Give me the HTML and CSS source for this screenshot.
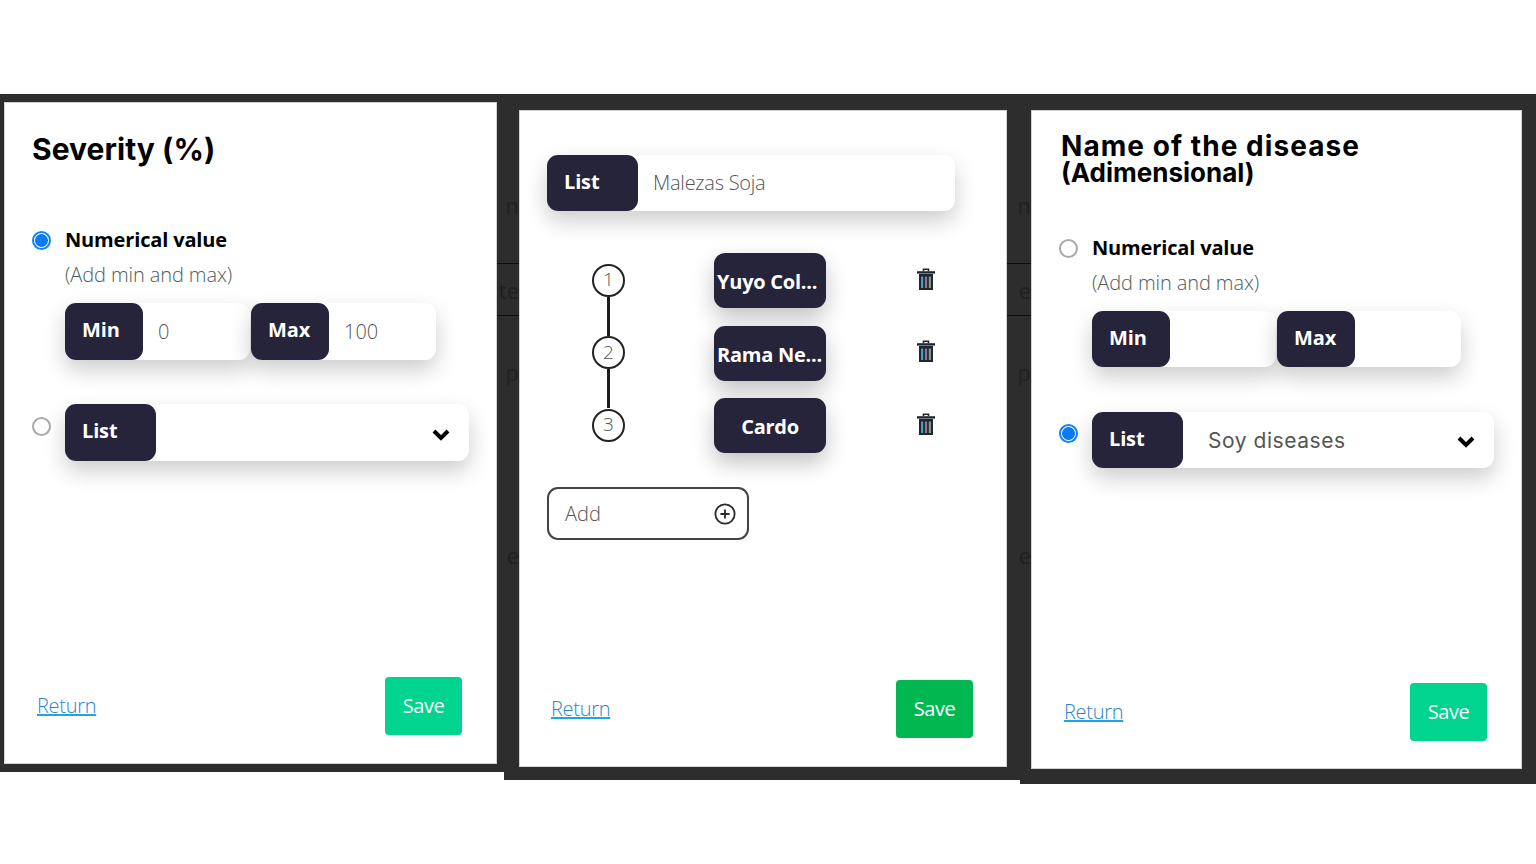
FILE: index.html
```html
<!DOCTYPE html>
<html lang="en">
  <head>
    <title>Variable settings</title>
    <link rel="stylesheet" href="styles.css">
  </head>
  <body>
    <div id="sheet">

      <!-- severity panel -->
      <section class="panel" id="panel-severity">
        <span class="ghost-line line-a"></span>
        <span class="ghost-line line-b"></span>
        <div class="title-box">
          <h1 class="title">Severity (%)</h1>
        </div>
        <div class="option">
          <input type="radio" class="radio" name="severity" checked>
          <div>
            <div class="option-name">Numerical value</div>
            <div class="option-hint">(Add min and max)</div>
            <div class="min-max">
              <div class="field"><span class="tag tag-short">Min</span><span class="field-value">0</span></div>
              <div class="field"><span class="tag tag-short">Max</span><span class="field-value">100</span></div>
            </div>
          </div>
        </div>
        <div class="option option-list">
          <input type="radio" class="radio" name="severity">
          <div class="field list-select">
            <span class="tag">List</span>
            <span class="select-value"></span>
            <svg class="chevron" viewBox="0 0 18 13"><path d="M2 3l7 7 7-7" fill="none" stroke="#000" stroke-width="4"/></svg>
          </div>
        </div>
        <div class="panel-foot">
          <a class="return-link" href="#">Return</a>
          <button class="save-btn">Save</button>
        </div>
      </section>

      <!-- list panel -->
      <section class="panel" id="panel-list">
        <span class="ghost-line line-a"></span>
        <span class="ghost-line line-b"></span>
        <span class="ghost-letter letter-a">n</span>
        <span class="ghost-letter letter-b">te</span>
        <span class="ghost-letter letter-c">p</span>
        <span class="ghost-letter letter-d">e</span>
        <div class="field list-name">
          <span class="tag">List</span>
          <span class="field-value">Malezas Soja</span>
        </div>
        <div class="steps">
          <div class="step">
            <span class="step-num">1</span>
            <span class="pill pill-cut">Yuyo Col...</span>
            <svg class="trash" viewBox="0 0 18 22"><use href="#trash-icon"/></svg>
          </div>
          <div class="step">
            <span class="step-num">2</span>
            <span class="pill pill-cut">Rama Ne...</span>
            <svg class="trash" viewBox="0 0 18 22"><use href="#trash-icon"/></svg>
          </div>
          <div class="step">
            <span class="step-num">3</span>
            <span class="pill">Cardo</span>
            <svg class="trash" viewBox="0 0 18 22"><use href="#trash-icon"/></svg>
          </div>
        </div>
        <div class="add-box">
          <span>Add</span>
          <svg class="plus" viewBox="0 0 24 24">
            <circle cx="12" cy="12" r="10.5" fill="none" stroke="#2b2b2b" stroke-width="2"/>
            <path d="M12 7v10M7 12h10" stroke="#2b2b2b" stroke-width="2"/>
          </svg>
        </div>
        <div class="panel-foot">
          <a class="return-link" href="#">Return</a>
          <button class="save-btn save-dark">Save</button>
        </div>
      </section>

      <!-- disease panel -->
      <section class="panel" id="panel-disease">
        <span class="ghost-line line-a"></span>
        <span class="ghost-line line-b"></span>
        <span class="ghost-letter letter-a">n</span>
        <span class="ghost-letter letter-b">e</span>
        <span class="ghost-letter letter-c">p</span>
        <span class="ghost-letter letter-d">e</span>
        <div class="title-box">
          <h1 class="title title-long">Name of the disease<br><span class="title-sub">(Adimensional)</span></h1>
        </div>
        <div class="option">
          <input type="radio" class="radio" name="disease">
          <div>
            <div class="option-name">Numerical value</div>
            <div class="option-hint">(Add min and max)</div>
            <div class="min-max">
              <div class="field"><span class="tag tag-short">Min</span></div>
              <div class="field"><span class="tag tag-short">Max</span></div>
            </div>
          </div>
        </div>
        <div class="option option-list">
          <input type="radio" class="radio" name="disease" checked>
          <div class="field list-select">
            <span class="tag">List</span>
            <span class="select-value">Soy diseases</span>
            <svg class="chevron" viewBox="0 0 18 13"><path d="M2 3l7 7 7-7" fill="none" stroke="#000" stroke-width="4"/></svg>
          </div>
        </div>
        <div class="panel-foot">
          <a class="return-link" href="#">Return</a>
          <button class="save-btn">Save</button>
        </div>
      </section>
    </div>

    <svg width="0" height="0" class="icon-defs">
      <symbol id="trash-icon" viewBox="0 0 18 22">
        <path d="M6.5 3V1.2h5V3" fill="none" stroke="#1c2730" stroke-width="1.6"/>
        <path d="M0 3.2h18v2.4H0z" fill="#1c2730"/>
        <path d="M2 6h14v16H2z" fill="#1c2730"/>
        <path d="M4 8.5h2.2V20H4z" fill="#4a9db5"/>
        <path d="M7.9 8.5h2.2V20H7.9z" fill="#9a6f9c"/>
        <path d="M11.8 8.5H14V20h-2.2z" fill="#7d9c8c"/>
      </symbol>
    </svg>
  </body>
</html>
```

FILE: styles.css
```css
* {
  margin: 0;
  padding: 0;
  box-sizing: border-box;
}

body {
  height: 100vh;
  overflow: hidden;
  background-color: #fff;
  font-family: "Open Sans", sans-serif;
  color: #000;
}

#sheet {
  display: flex;
  align-items: flex-start;
  padding-top: 94px;
}

.icon-defs {
  position: absolute;
}

/* panels, the dark frame is the border */
.panel {
  position: relative;
  display: flex;
  flex-direction: column;
  background-color: #fff;
  border-style: solid;
  border-color: #2d2d2d;
  padding: 0 0 29px 28px;
  box-shadow: inset 0 0 0 1px #d2d2d2;
}

#panel-severity {
  width: 504px;
  height: 678px;
  border-width: 8px 7px 8px 4px;
}

#panel-list {
  width: 516px;
  height: 686px;
  border-width: 16px 13px 13px 15px;
}

#panel-disease {
  width: 516px;
  height: 690px;
  border-width: 16px 14px 15px 11px;
  padding-bottom: 28px;
}

/* bits of the page behind, showing through the frame */
.ghost-line {
  position: absolute;
  right: 100%;
  width: 15px;
  height: 1px;
  background-color: #0c0c0c;
}

.line-a {
  top: 153px;
}

.line-b {
  top: 205px;
}

#panel-severity .ghost-line {
  left: 100%;
  right: auto;
  width: 7px;
}

#panel-severity .line-a {
  top: 161px;
}

#panel-severity .line-b {
  top: 213px;
}

#panel-disease .ghost-line {
  width: 24px;
}

.ghost-letter {
  position: absolute;
  right: 100%;
  font-size: 22px;
  line-height: 24px;
  color: #202020;
  white-space: nowrap;
}

.letter-a {
  top: 83px;
}

.letter-b {
  top: 168px;
}

.letter-c {
  top: 250px;
}

.letter-d {
  top: 433px;
}

/* headings */
.title-box {
  height: 126px;
  padding-top: 28px;
}

.title {
  font-family: Inter, sans-serif;
  font-size: 30px;
  line-height: 38px;
  font-weight: 700;
  letter-spacing: 0.05px;
}

#panel-disease .title-box {
  padding: 23px 0 0 2px;
}

.title-long {
  font-size: 28px;
  line-height: 26px;
  letter-spacing: 1.05px;
}

.title-sub {
  font-size: 26px;
  letter-spacing: 0;
}

/* radio rows */
.option {
  display: grid;
  grid-template-columns: 19px auto;
  column-gap: 14px;
  justify-content: start;
}

.option-list {
  margin-top: 44px;
}

#panel-disease .option-list {
  margin-top: 45px;
}

.radio {
  appearance: none;
  width: 19px;
  height: 19px;
  margin-top: 3px;
  border: 2px solid #a9a9a9;
  border-radius: 50%;
  background-color: #fff;
}

.radio:checked {
  border-color: #0b84ff;
  background: radial-gradient(circle, #0b7bf5 0, #0b7bf5 6px, #fff 6.8px);
}

.option-list .radio {
  margin-top: 13px;
}

#panel-disease .option-list .radio {
  margin-top: 12px;
}

.option-name {
  font-size: 20px;
  line-height: 24px;
  font-weight: 700;
  letter-spacing: -0.15px;
}

.option-hint {
  margin-top: 11px;
  font-size: 20px;
  line-height: 24px;
  font-weight: 300;
  letter-spacing: -0.1px;
  color: #4d5c5c;
}

/* label + value fields */
.field {
  display: flex;
  align-items: center;
  height: 57px;
  background-color: #fff;
  border-radius: 11px;
  box-shadow: 0 10px 22px rgba(0, 0, 0, 0.2);
}

#panel-disease .field {
  height: 56px;
}

.tag {
  display: flex;
  align-items: center;
  flex: none;
  width: 91px;
  height: 100%;
  padding: 0 0 4px 17px;
  background-color: #25243a;
  border-radius: 11px;
  color: #fff;
  font-size: 20px;
  font-weight: 700;
  letter-spacing: -0.15px;
}

.tag-short {
  width: 78px;
}

.field-value {
  padding-left: 15px;
  font-size: 20px;
  font-weight: 300;
  color: #555;
}

.min-max {
  display: flex;
  gap: 1px;
  width: 371px;
  margin-top: 16px;
}

.min-max .field {
  flex: 1;
}

#panel-disease .min-max {
  width: 369px;
}

.list-select {
  width: 404px;
}

#panel-disease .list-select {
  width: 402px;
}

.select-value {
  flex: 1;
  padding-left: 25px;
  font-family: Inter, sans-serif;
  font-size: 21px;
  letter-spacing: 0.55px;
  color: #555;
}

.chevron {
  width: 18px;
  height: 13px;
  margin: 3px 19px 0 0;
}

/* list panel */
.list-name {
  width: 408px;
  height: 56px;
  margin-top: 45px;
}

.list-name .field-value {
  padding-bottom: 2px;
  letter-spacing: -0.25px;
}

.steps {
  display: flex;
  flex-direction: column;
  gap: 17.5px;
  margin-top: 42px;
  padding-left: 45px;
}

.step {
  position: relative;
  display: flex;
  align-items: center;
  height: 55px;
}

.step-num {
  position: relative;
  display: flex;
  align-items: center;
  justify-content: center;
  width: 33px;
  height: 33px;
  margin: -1px 89px 0 0;
  padding-bottom: 2px;
  border: 2px solid #222;
  border-radius: 50%;
  background-color: #fff;
  font-size: 19px;
  font-weight: 300;
  color: #555;
}

.step-num::after {
  content: "";
  position: absolute;
  left: 13px;
  top: 31px;
  width: 3px;
  height: 39px;
  background-color: #1c1c1c;
}

.step:last-child .step-num::after {
  display: none;
}

.pill {
  flex: none;
  display: flex;
  align-items: center;
  justify-content: center;
  width: 112px;
  height: 100%;
  padding-top: 2px;
  background-color: #25243a;
  border-radius: 11px;
  box-shadow: 0 10px 22px rgba(0, 0, 0, 0.24);
  color: #fff;
  font-size: 20px;
  font-weight: 700;
  letter-spacing: -0.25px;
  white-space: nowrap;
}

.pill-cut {
  justify-content: flex-start;
  padding-left: 3px;
}

.trash {
  width: 18px;
  height: 22px;
  margin: -4px 0 0 91px;
}

.add-box {
  display: flex;
  align-items: center;
  justify-content: space-between;
  width: 202px;
  height: 53px;
  margin-top: 34px;
  padding: 0 11px 0 16px;
  border: 2px solid #444;
  border-radius: 11px;
  font-size: 20px;
  font-weight: 300;
  color: #555;
}

.plus {
  width: 22px;
  height: 22px;
}

/* footer */
.panel-foot {
  display: flex;
  align-items: center;
  justify-content: space-between;
  margin-top: auto;
  padding: 0 35px 0 5px;
}

#panel-list .panel-foot {
  padding: 0 34px 0 4px;
}

.return-link {
  padding-bottom: 2px;
  font-size: 20px;
  font-weight: 300;
  letter-spacing: -0.3px;
  color: #2a86c8;
  text-decoration: underline;
  text-decoration-color: #1fa5e0;
}

.save-btn {
  width: 77px;
  height: 58px;
  padding-bottom: 2px;
  border: none;
  border-radius: 4px;
  background-color: #00d48f;
  color: #fff;
  font-family: "Open Sans", sans-serif;
  font-size: 20px;
  letter-spacing: -0.5px;
}

.save-dark {
  background-color: #00b84f;
}
```
